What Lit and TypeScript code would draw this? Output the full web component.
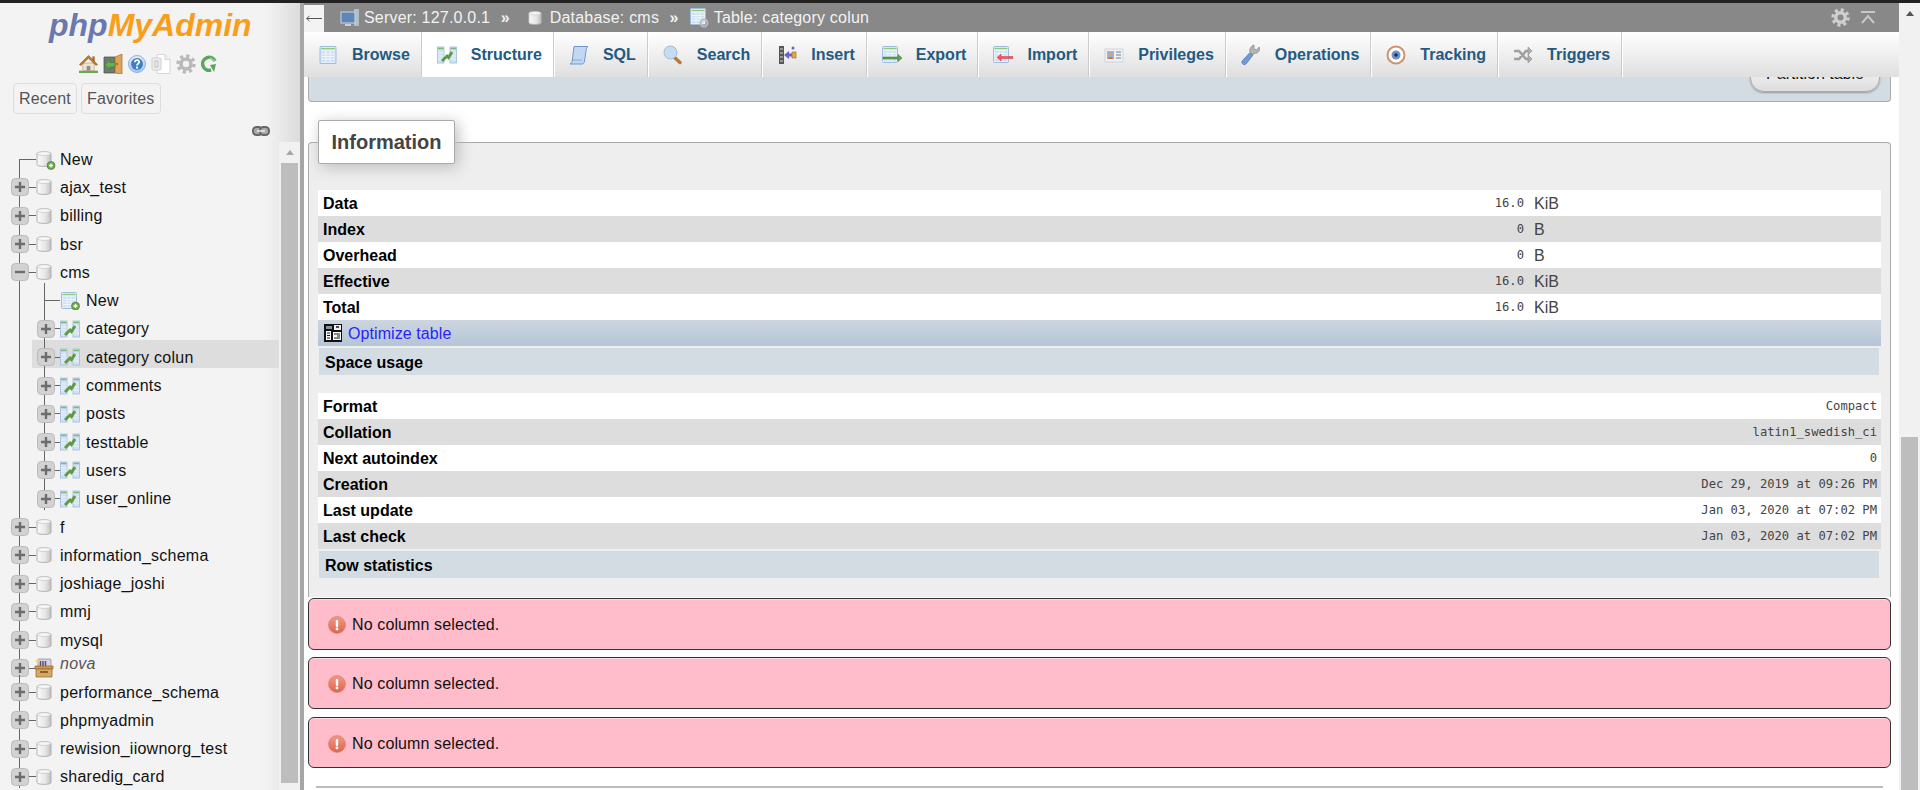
import { LitElement, html, css, svg } from "lit";
import { customElement } from "lit/decorators.js";

const gear = (size: number, c: string) => html`<svg width=${size} height=${size} viewBox="0 0 20 20"><circle cx="10" cy="10" r="8" fill="none" stroke=${c} stroke-width="3.4" stroke-dasharray="3.2 3.08"/><circle cx="10" cy="10" r="5" fill="none" stroke=${c} stroke-width="3.6"/></svg>`;
const plusBadge = svg`<circle cx="14.5" cy="14.5" r="4" fill="#6fa84f" stroke="#4d7f36" stroke-width=".7"/><path d="M12.5 14.5h4M14.5 12.5v4" stroke="#fff" stroke-width="1.3"/>`;
const dbBody = svg`<path d="M1 3.5C1 1.3 15 1.3 15 3.5V14.5C15 17 1 17 1 14.5Z" fill="url(#dbg)" stroke="#b0b0b0"/><ellipse cx="8" cy="3.6" rx="6.6" ry="1.9" fill="#f6f6f6" stroke="#c4c4c4" stroke-width=".7"/>`;
const dbIcon = html`<svg class="ti" width="16" height="18" viewBox="0 0 16 18">${dbBody}</svg>`;
const dbNew = html`<svg class="ti ov" width="16" height="18" viewBox="0 0 16 18">${dbBody}<g transform="translate(.5 1)">${plusBadge}</g></svg>`;
const gridBody = svg`<rect x=".5" y=".5" width="15" height="16" rx="1" fill="#e4edf8" stroke="#9dbce0"/><path d="M1.500 2.500h13" stroke="#8ccb7e" stroke-width="1.300"/><path d="M2 5h12v10H2z" fill="#cfe0f5"/><path d="M2 7.500h12M2 10h12M2 12.500h12M6 5v10M10 5v10" stroke="#f2f6fc" stroke-width=".9"/>`;
const structIcon = (w = 20, h = 18) => html`<svg class="ti" width=${w} height=${h} viewBox="0 0 20 18"><rect x=".5" y="1" width="6.500" height="16" fill="#d3e2f4" stroke="#9dbce0" stroke-width=".8"/><rect x="13" y="1" width="6.500" height="16" fill="#d3e2f4" stroke="#9dbce0" stroke-width=".8"/><path d="M1 2.500h5.500M13.500 2.500H19" stroke="#7fb873" stroke-width="1.400"/><path d="M1 7h6M1 10h6M1 13h6M13 7h6M13 10h6M13 13h6" stroke="#f2f6fc" stroke-width=".8"/><path d="M5 15l5-5 1.500 1.500L15 6" fill="none" stroke="#5c9c46" stroke-width="3"/></svg>`;
const tblNew = html`<svg class="ti" width="19" height="18" viewBox="0 0 19 18">${gridBody}<g transform="translate(0 -.5)">${plusBadge}</g></svg>`;
const pkg = html`<svg class="ti" width="20" height="20" viewBox="0 0 20 20"><rect x="4" y="1" width="13" height="8" rx="1" fill="#d7d2df" stroke="#8c8498" stroke-width=".7"/><path d="M6.500 3v6M9 3v6M11.500 3v6" stroke="#5c4c78" stroke-width="1.500"/><circle cx="3.500" cy="3" r="1.800" fill="#ecd47c"/><path d="M1 8h18v3H1z" fill="#c99a58" stroke="#94652a" stroke-width=".7"/><path d="M2 11h16v8H2z" fill="#d6a868" stroke="#94652a" stroke-width=".7"/><rect x="6" y="13" width="8" height="2" fill="#8d6027"/></svg>`;
const sideIcons = [
  html`<svg width="19" height="20" viewBox="0 0 20 20"><path d="M0 19.500h20v-2.500H0z" fill="#6aa84f"/><path d="M14 2h2.500v6H14z" fill="#a46a30"/><path d="M4 9h12v8H4z" fill="#efe6d2" stroke="#b09b76" stroke-width=".7"/><path d="M8 17v-5h4v5z" fill="#8f8f8f"/><path d="M10 1 .5 10.500l1.500 1L10 4l8 7.500 1.500-1z" fill="#bd7a35" stroke="#8c5520" stroke-width=".6"/></svg>`,
  html`<svg width="20" height="20" viewBox="0 0 20 20"><path d="M1 3h11v16H1z" fill="#6f7a70" stroke="#4b4b4b" stroke-width=".7"/><path d="M12 3l7-3v20l-7-1z" fill="#dfa35a" stroke="#a86e2a" stroke-width=".7"/><circle cx="14" cy="10" r=".9" fill="#8c5520"/><path d="M2 10.500l5-5v3h5v4.500H7v3z" fill="#68b04e" stroke="#3f7a30" stroke-width=".7"/></svg>`,
  html`<svg width="18" height="20" viewBox="0 0 18 18"><circle cx="9" cy="9" r="8.500" fill="url(#helpg)" stroke="#6f97c8" stroke-width=".7"/><circle cx="9" cy="9" r="6" fill="#3f7fc6"/><path d="M6.800 7.200C6.800 4.400 11.400 4.600 11.200 7.300 11.100 8.800 9 8.800 9 10.500" fill="none" stroke="#fff" stroke-width="1.800"/><rect x="8" y="11.600" width="2" height="2" fill="#fff"/></svg>`,
  html`<svg width="20" height="20" viewBox="0 0 20 20"><path d="M6 .500h8l5 5v14H6z" fill="#fff" stroke="#d5d5d5"/><path d="M14 .500v5h5" fill="#eee" stroke="#d5d5d5"/><rect x="1" y="4" width="9" height="12" rx="1" fill="#eee" stroke="#cfcfcf"/><rect x="4" y="7" width="3" height="6" fill="none" stroke="#bbb"/></svg>`,
  gear(20, "#b9b9b9"),
  html`<svg width="16" height="20" viewBox="0 0 16 20"><path d="M14 7A6.500 6.500 0 1 0 10 16" fill="none" stroke="#58a85a" stroke-width="3.500"/><path d="M9 11l6-1-2 8z" fill="#58a85a"/><path d="M9 4l5 3" stroke="#8fcf8f" stroke-width="1.500"/></svg>`,
];
const tabs = [
  ["Browse", html`<svg width="18" height="18" viewBox="0 0 16 17">${gridBody}</svg>`],
  ["Structure", structIcon()],
  ["SQL", html`<svg width="20" height="20" viewBox="0 0 20 20"><path d="M5 1.500h14c-1.500 1-2 3-2 5l-1.500 9.500c-.3 2-1 3-3 3H1c2-1 2-2 2.300-4z" fill="#c2d8f2" stroke="#6e97cc"/><path d="M3.300 15H13" stroke="#6e97cc" stroke-width=".7"/></svg>`],
  ["Search", html`<svg width="20" height="20" viewBox="0 0 20 20"><path d="M11.500 12.500l5.500 5" stroke="#b9793c" stroke-width="3.500" stroke-linecap="round"/><circle cx="7.500" cy="7.500" r="6.500" fill="#c4dcf4" stroke="#a4bcd4"/></svg>`],
  ["Insert", html`<svg width="20" height="20" viewBox="0 0 20 20"><path d="M2 1h5v18H2z" fill="#555"/><path d="M3 4h3M3 8h3M3 12h3M3 16h3" stroke="#ddd"/><path d="M7 10l5-4v2.500h3v3h-3V14z" fill="#6a5fd0"/><rect x="15" y="7" width="4" height="6" fill="#dcae42" stroke="#8c6b1f" stroke-width=".6"/><circle cx="16" cy="3" r="1.500" fill="#6a5fd0"/></svg>`],
  ["Export", html`<svg width="20" height="18" viewBox="0 0 20 18">${gridBody}<path d="M1 11h15V8.500l4 3.500-4 3.500V13H1z" fill="#5fa347" stroke="#3f7a30" stroke-width=".5"/></svg>`],
  ["Import", html`<svg width="20" height="18" viewBox="0 0 20 18">${gridBody}<path d="M20 10.500H8V8l-4 3.500L8 15v-2.500h12z" fill="#f0565a" stroke="#d13a3f" stroke-width=".5"/></svg>`],
  ["Privileges", html`<svg width="20" height="18" viewBox="0 0 20 18"><rect x="1" y="3" width="18" height="13" fill="#eef1f4" stroke="#d0d4d9"/><rect x="3" y="5" width="7" height="8" fill="#8fb7e3"/><circle cx="6.500" cy="8" r="2" fill="#e0a068"/><path d="M4 13c0-3 5-3 5 0z" fill="#c9763e"/><path d="M12 6h5M12 9h5M12 12h5" stroke="#9aa4b0" stroke-width="1.300"/></svg>`],
  ["Operations", html`<svg width="20" height="22" viewBox="0 0 20 22"><path d="M2.500 20.500C.5 19.500.5 17.500 1.500 16.500L9 8.500l3 2.500-6.500 8.500c-1 1-2 1.500-3 1z" fill="#6f9ad6" stroke="#4e76ad" stroke-width=".7"/><path d="M9 8.500C8 5 10 2 13 1v4l2.500 1L18 3c1.500 3-.5 7-5.500 6.500L12 11z" fill="#b4b4b4" stroke="#858585" stroke-width=".7"/></svg>`],
  ["Tracking", html`<svg width="20" height="20" viewBox="0 0 20 20"><circle cx="10" cy="10" r="8.500" fill="#fff" stroke="#d2926a" stroke-width="2"/><circle cx="10" cy="10" r="4.500" fill="#6c8fc9"/><circle cx="10" cy="10" r="1.800" fill="#1f2d55"/></svg>`],
  ["Triggers", html`<svg width="20" height="18" viewBox="0 0 20 18"><path d="M1 5h5l7 8h3M1 13h5l7-8h3" fill="none" stroke="#a0a0a0" stroke-width="2.600"/><path d="M15 1l4 4-4 4zM15 9l4 4-4 4z" fill="#b0b0b0" stroke="#8b8b8b" stroke-width=".6"/></svg>`],
] as const;

type Row = { n: string; l: 0 | 1; e?: "+" | "-"; kind?: "new" | "pkg"; active?: boolean };
const rows: Row[] = [
  { n: "New", l: 0, kind: "new" },
  ...["ajax_test", "billing", "bsr"].map((n) => ({ n, l: 0 as const, e: "+" as const })),
  { n: "cms", l: 0, e: "-" },
  { n: "New", l: 1, kind: "new" },
  { n: "category", l: 1, e: "+" },
  { n: "category colun", l: 1, e: "+", active: true },
  ...["comments", "posts", "testtable", "users", "user_online"].map((n) => ({ n, l: 1 as const, e: "+" as const })),
  ...["f", "information_schema", "joshiage_joshi", "mmj", "mysql"].map((n) => ({ n, l: 0 as const, e: "+" as const })),
  { n: "nova", l: 0, e: "+", kind: "pkg" },
  ...["performance_schema", "phpmyadmin", "rewision_iiownorg_test", "sharedig_card"].map((n) => ({ n, l: 0 as const, e: "+" as const })),
];

const sizes = [["Data", "16.0", "KiB"], ["Index", "0", "B"], ["Overhead", "0", "B"], ["Effective", "16.0", "KiB"], ["Total", "16.0", "KiB"]];
const stats = [["Format", "Compact"], ["Collation", "latin1_swedish_ci"], ["Next autoindex", "0"], ["Creation", "Dec 29, 2019 at 09:26 PM"], ["Last update", "Jan 03, 2020 at 07:02 PM"], ["Last check", "Jan 03, 2020 at 07:02 PM"]];

@customElement("app-root")
export class AppRoot extends LitElement {
  static styles = css`
    :host { display: block; height: 790px; overflow: hidden; font-family: "Liberation Sans", Arial, sans-serif; font-size: 16px; color: #000; background: #fff; }
    .blackbar { height: 3px; background: #222; }
    .page { display: flex; height: 787px; }
    .defs { position: absolute; width: 0; height: 0; }

    .side { width: 300px; flex: none; display: flex; flex-direction: column; background: linear-gradient(to right, #f3f3f3 265px, #dcdcdc 300px); }
    .logo { padding: 3px 0 0 49px; height: 41px; box-sizing: border-box; font-size: 32px; line-height: 38px; font-weight: bold; font-style: italic; color: #6b78ae; white-space: nowrap; }
    .logo span { color: #f89e1b; }
    .sicons { display: flex; gap: 5px; padding: 10px 0 0 79px; height: 20px; }
    .sbtns { display: flex; gap: 4px; padding: 9px 0 0 13px; letter-spacing: .2px; }
    .sbtn { height: 31px; box-sizing: border-box; padding: 0 5px; border: 1px solid #ddd; border-radius: 4px; display: flex; align-items: center; color: #555; }
    .linkrow { height: 28px; padding: 12px 0 0 252px; box-sizing: border-box; }
    .linkrow svg { display: block; }
    .treewrap { flex: 1; display: flex; min-height: 0; }
    .tree { flex: 1; min-width: 0; overflow: hidden; letter-spacing: .25px; }
    .row { position: relative; height: 28.3px; box-sizing: border-box; padding-top: 6px; display: flex; align-items: center; white-space: nowrap; color: #111; }
    .row.l0 { padding-left: 11px; }
    .row.l1 { padding-left: 37px; }
    .row.l0.noexp { padding-left: 19px; }
    .row.l1.noexp { padding-left: 44px; }
    .row.nova { height: 23.6px; padding-top: 10px; }
    .row .name { margin-top: 1px; }
    .row.nova .name { font-style: italic; color: #555; margin: 0 0 8px; }
    .row > * { position: relative; }
    .row .hl { position: absolute; left: 32px; right: 0; top: 0; bottom: 0; background: #ddd; }
    .row .v { position: absolute; width: 1px; background: #666; top: 0; bottom: 0; }
    .row .v.a { left: 19px; }
    .row .v.b { left: 44px; }
    .row .v.first { top: 17px; }
    .exp { width: 18px; height: 18px; flex: none; display: block; }
    .dash { height: 1px; background: #666; flex: none; }
    .l0 .dash { width: 7px; }
    .l1 .dash { width: 5px; }
    .l0.noexp .dash { width: 17px; }
    .l1.noexp .dash { width: 16px; }
    .l0 .ti { margin-right: 8px; }
    .l1 .ti { margin-right: 6px; }
    .l1.noexp .ti { margin-left: 1px; }
    .nova .ti { margin: 0 6px 0 -2px; }
    .ti { flex: none; display: block; }
    .ti.ov { overflow: visible; }

    .sbar { width: 21px; flex: none; background: #f1f1f1; display: flex; flex-direction: column; align-items: center; }
    .arrow { width: 0; height: 0; border-left: 4.5px solid transparent; border-right: 4.5px solid transparent; border-bottom: 5px solid #a8a8a8; margin-top: 8px; }
    .sthumb { width: 17px; height: 620px; margin-top: 8px; background: #bdbdbd; }
    .split { width: 4px; flex: none; background: #a6a6a6; }

    .main { flex: 1; min-width: 0; position: relative; overflow: hidden; }
    .header { position: absolute; left: 0; right: 0; top: 0; z-index: 5; }
    .topbar { height: 29px; background: #888; display: flex; align-items: center; color: #f2f2f2; white-space: nowrap; padding-right: 24px; letter-spacing: .2px; }
    .back { width: 20px; height: 27px; background: #f3f3f3; display: flex; align-items: center; justify-content: center; margin-top: 1px; }
    .back svg { display: block; }
    .crumb-sv { margin: 0 4px 0 16px; display: block; }
    .crumb-db { margin: 0 8px 0 18px; display: block; }
    .crumb-tb { margin: 0 5px 0 11px; display: block; }
    .sep { margin-left: 10.5px; font-weight: bold; }
    .tright { margin-left: auto; display: flex; align-items: center; gap: 11px; }
    .tright svg { display: block; }
    .tabs { height: 45px; display: flex; background: linear-gradient(#fff, #dfdfdf); }
    .tab { display: flex; align-items: center; padding: 0 12px 0 14px; box-sizing: border-box; border-right: 1px solid #fff; box-shadow: inset -2px 0 0 -1px #ccc; font-weight: bold; color: #235a81; white-space: nowrap; }
    .tab.on { background: #fff; }
    .tab .tic { width: 20px; margin-right: 14px; display: flex; justify-content: center; }
    .tab svg { display: block; }

    .content { padding: 36px 8px 0 4px; }
    .panel { height: 63px; box-sizing: border-box; background: #d3dce3; border: 1px solid #aaa; border-top: 0; border-radius: 0 0 4px 4px; display: flex; justify-content: flex-end; align-items: flex-start; padding: 17px 10px 0 0; }
    .pbtn { height: 36px; width: 130px; box-sizing: border-box; border: 1px solid #aaa; border-radius: 14px; background: linear-gradient(#fff, #ddd); display: flex; align-items: center; justify-content: center; box-shadow: 0 1px 2px #999; color: #111; }
    .field { margin-top: 40px; height: 455px; box-sizing: border-box; background: #eee; border: 1px solid #aaa; border-bottom: 0; border-radius: 4px 4px 0 0; padding: 0 9px; }
    .legend { width: 137px; height: 44px; margin-top: -23px; box-sizing: border-box; background: #fff; border: 1px solid #aaa; border-radius: 2px; box-shadow: 3px 3px 15px #bbb; display: flex; align-items: center; justify-content: center; font-size: 20px; font-weight: bold; color: #444; }
    .sizes { margin-top: 26px; }
    .tr { height: 26px; background: #fff; display: grid; grid-template-columns: 1095px 106px 1fr; align-items: center; padding-left: 5px; box-sizing: border-box; }
    .tr:nth-child(even), .st:nth-child(even) { background: #ddd; }
    .lbl { font-weight: bold; padding-top: 2px; }
    .tr .val { text-align: right; font-family: "DejaVu Sans Mono", monospace; font-size: 12.16px; color: #444; }
    .tr .unit { padding: 2px 0 0 10px; color: #444; }
    .st { height: 26px; background: #fff; display: flex; justify-content: space-between; align-items: center; padding: 0 4px 0 5px; box-sizing: border-box; }
    .st .val { font-family: "DejaVu Sans Mono", monospace; font-size: 12.16px; color: #444; }
    .opt { height: 26px; background: linear-gradient(#cdd6e0, #b4c5d6); display: flex; align-items: center; padding-left: 6px; color: #2a1fff; letter-spacing: .08px; }
    .opt svg { display: block; margin-right: 6px; }
    .opt span { padding-top: 2px; }
    .cap { height: 27px; margin: 2px 2px 0 1px; background: #d3dce3; font-weight: bold; display: flex; align-items: center; padding: 2px 0 0 6px; box-sizing: border-box; }
    .stats { margin-top: 18px; }
    .err { height: 52px; box-sizing: border-box; margin-top: 7px; background: #ffbccb; border: 1px solid #333; border-radius: 6px; box-shadow: inset 0 1px 0 #ffd9e1; display: flex; align-items: center; padding: 2px 0 0 19px; color: #111; letter-spacing: .12px; }
    .err.f { margin-top: 1px; padding-top: 1px; }
    .err.z { margin-top: 8px; height: 51px; }
    .err svg { display: block; margin-right: 6px; }
    hr { border: 0; height: 2px; margin: 18px 8px 0 8px; background: #bbb; }
    .pscroll { width: 21px; flex: none; background: #f1f1f1; display: flex; flex-direction: column; align-items: center; position: relative; }
    .parrow { width: 0; height: 0; border-left: 4.5px solid transparent; border-right: 4.5px solid transparent; border-bottom: 5px solid #555; margin-top: 8px; }
    .pthumb { width: 17px; height: 353px; margin-top: 421px; background: #bdbdbd; }
  `;

  private expander(e: "+" | "-") {
    return html`<svg class="exp" viewBox="0 0 18 18"><rect x=".5" y=".5" width="17" height="17" rx="4" fill="#d2d2d2" stroke="#bbb"/><path d=${e === "+" ? "M4 9h10M9 4v10" : "M4 9h10"} stroke="#6d6d6d" stroke-width="2.400"/></svg>`;
  }

  private row(r: Row, i: number) {
    const cls = `row l${r.l} ${r.e ? "" : "noexp"} ${r.kind === "pkg" ? "nova" : ""}`;
    const inCms = i > 4 && i <= 12;
    let icon = r.l === 1 ? structIcon() : dbIcon;
    if (r.kind === "new") icon = r.l === 1 ? tblNew : dbNew;
    if (r.kind === "pkg") icon = pkg;
    return html`<div class=${cls}>
      ${r.active ? html`<i class="hl"></i>` : ""}
      <i class="v a ${i === 0 ? "first" : ""}"></i>
      ${inCms ? html`<i class="v b"></i>` : ""}
      ${r.e ? this.expander(r.e) : ""}
      <i class="dash"></i>
      ${icon}
      <span class="name">${r.n}</span>
    </div>`;
  }

  render() {
    const errIcon = html`<svg width="18" height="18" viewBox="0 0 18 18"><circle cx="9" cy="9" r="8.500" fill="url(#errg)" stroke="#d97a66" stroke-width=".6"/><rect x="7.800" y="4" width="2.400" height="7" rx="1" fill="#fff"/><circle cx="9" cy="13" r="1.400" fill="#fff"/></svg>`;
    return html`
      <svg class="defs"><defs>
        <linearGradient id="dbg"><stop offset="0" stop-color="#fafafa"/><stop offset=".6" stop-color="#e6e6e6"/><stop offset="1" stop-color="#bfbfbf"/></linearGradient>
        <linearGradient id="helpg" x2="0" y2="1"><stop offset="0" stop-color="#e4eefa"/><stop offset="1" stop-color="#a9c8ec"/></linearGradient>
        <linearGradient id="errg" x2="0" y2="1"><stop offset="0" stop-color="#ee9a86"/><stop offset="1" stop-color="#e0634c"/></linearGradient>
      </defs></svg>
      <div class="blackbar"></div>
      <div class="page">
        <aside class="side">
          <div class="logo">php<span>MyAdmin</span></div>
          <div class="sicons">${sideIcons}</div>
          <div class="sbtns"><div class="sbtn">Recent</div><div class="sbtn">Favorites</div></div>
          <div class="linkrow"><svg width="18" height="10" viewBox="0 0 18 10"><rect x="1" y="1" width="9" height="8" rx="3.500" fill="#aaa" stroke="#666" stroke-width="2"/><rect x="8" y="1" width="9" height="8" rx="3.500" fill="#aaa" stroke="#666" stroke-width="2"/><path d="M5 5h8" stroke="#eee" stroke-width="1.500"/></svg></div>
          <div class="treewrap">
            <div class="tree">${rows.map((r, i) => this.row(r, i))}</div>
            <div class="sbar"><i class="arrow"></i><i class="sthumb"></i></div>
          </div>
        </aside>
        <div class="split"></div>
        <main class="main">
          <header class="header">
            <div class="topbar">
              <div class="back"><svg width="16" height="7" viewBox="0 0 16 7"><path d="M.5 3.500H16M3.500.8.800 3.500l2.700 2.700" fill="none" stroke="#555" stroke-width="1"/></svg></div>
              <svg class="crumb-sv" width="20" height="20" viewBox="0 0 20 20"><rect x="14" y="1" width="5" height="17" fill="#b4bcc4"/><rect x="1" y="4" width="14" height="11" fill="#5f86b8" stroke="#cfd6dc"/><path d="M5 17h6" stroke="#c8ced4" stroke-width="2"/></svg>
              <span>Server: 127.0.0.1</span><span class="sep">»</span>
              <svg class="crumb-db" width="14" height="18" viewBox="0 0 16 18">${dbBody}</svg>
              <span>Database: cms</span><span class="sep">»</span>
              <svg class="crumb-tb" width="19" height="20" viewBox="0 0 19 20">${gridBody}<circle cx="14" cy="15" r="3.500" fill="none" stroke="#bbb" stroke-width="2"/></svg>
              <span>Table: category colun</span>
              <div class="tright">
                ${gear(19, "#cfcfcf")}
                <svg width="14" height="13" viewBox="0 0 14 13"><path d="M0 1h14" stroke="#c8c8c8" stroke-width="2"/><path d="M1 12l6-7 6 7" fill="none" stroke="#c8c8c8" stroke-width="2"/></svg>
              </div>
            </div>
            <nav class="tabs">
              ${tabs.map(([t, ic]) => html`<div class="tab ${t === "Structure" ? "on" : ""}"><span class="tic">${ic}</span>${t}</div>`)}
            </nav>
          </header>
          <div class="content">
            <div class="panel"><div class="pbtn">Partition table</div></div>
            <section class="field">
              <div class="legend">Information</div>
              <div class="sizes">
                ${sizes.map(([a, b, c]) => html`<div class="tr"><span class="lbl">${a}</span><span class="val">${b}</span><span class="unit">${c}</span></div>`)}
              </div>
              <div class="opt"><svg width="18" height="18" viewBox="0 0 18 18"><rect width="18" height="18" fill="#111"/><rect x="2" y="2" width="6" height="3" fill="#8a8fa8"/><rect x="10" y="1" width="7" height="5" fill="#eee"/><path d="M12 3h3" stroke="#111" stroke-width="1.500"/><rect x="2" y="7" width="5" height="9" fill="#fff"/><path d="M3 9h3M3 11.500h3M3 14h3" stroke="#111"/><rect x="9" y="8" width="8" height="8" fill="#fff"/><path d="M10 10h6M13 12h3M10 14h6" stroke="#111"/></svg><span>Optimize table</span></div>
              <div class="cap">Space usage</div>
              <div class="stats">
                ${stats.map(([a, b]) => html`<div class="st"><span class="lbl">${a}</span><span class="val">${b}</span></div>`)}
              </div>
              <div class="cap">Row statistics</div>
            </section>
            <div class="err f">${errIcon}No column selected.</div>
            <div class="err">${errIcon}No column selected.</div>
            <div class="err z">${errIcon}No column selected.</div>
            <hr />
          </div>
        </main>
        <div class="pscroll"><i class="parrow"></i><i class="pthumb"></i></div>
      </div>
    `;
  }
}
